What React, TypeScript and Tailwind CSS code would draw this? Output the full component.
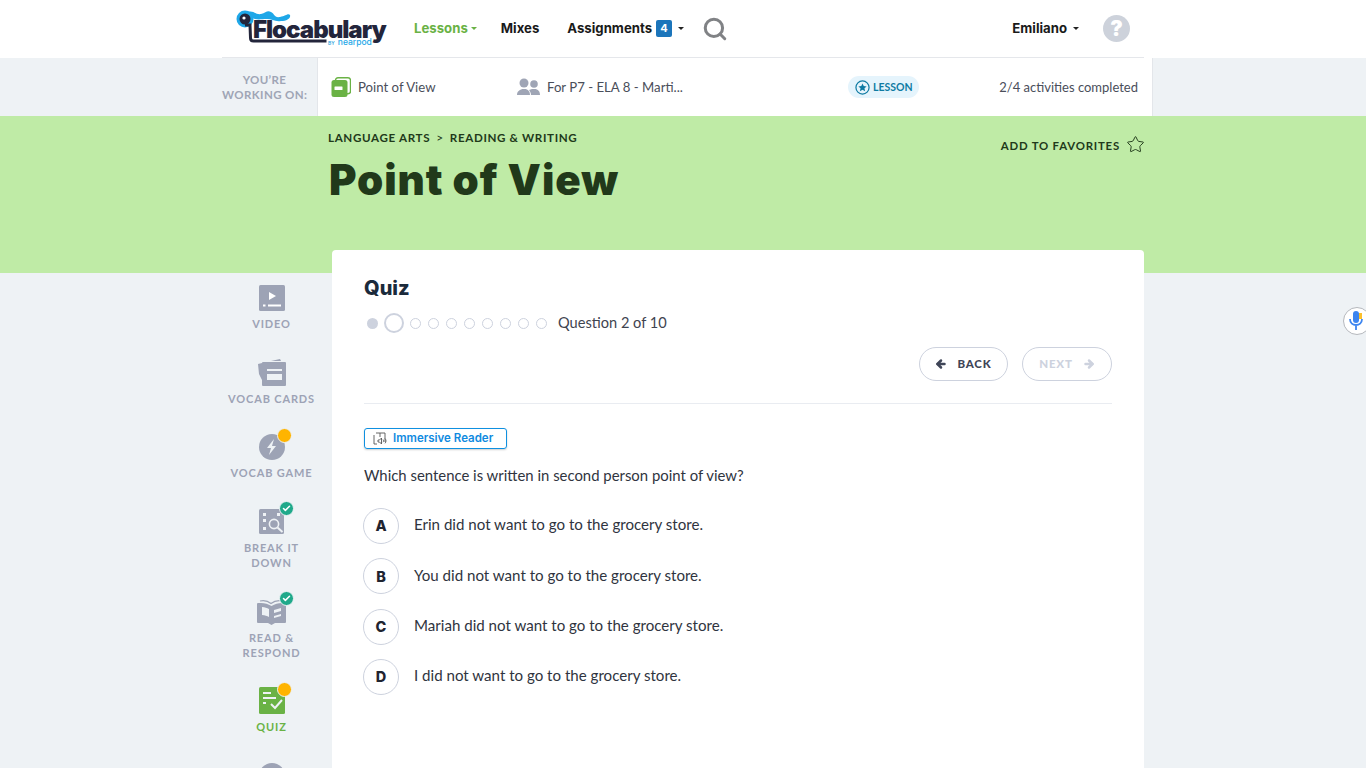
// App.tsx
import { Search, ArrowLeft, ArrowRight, Star, Check } from 'lucide-react';

const bodyFont = "font-['Lato','Noto_Sans',sans-serif]";
const headFont = "font-['Inter','Liberation_Sans',sans-serif]";

function Caret({ color = 'border-t-[#222]' }: { color?: string }) {
  return <span className={`inline-block w-0 h-0 border-x-[3px] border-x-transparent border-t-[3px] ${color}`} />;
}

function Logo() {
  return (
    <div className="relative w-[150px] h-[36px] shrink-0">
      <svg className="absolute left-0 top-0" width="150" height="36" viewBox="0 0 150 36">
        <path d="M12 2c5-2 8 3 13 2s6-4 10-2 3 6 9 5 8-4 10-2c1 3-3 6-9 6-6 1-9-2-14-2s-8 1-12 0-7-4-7-7z" fill="#1ea7e8" />
        <circle cx="9" cy="9" r="8.500" fill="#1ea7e8" />
        <circle cx="9" cy="9" r="5.500" fill="#23253b" />
        <circle cx="8" cy="8" r="1.600" fill="#fff" />
        <path d="M9 15l5 0 0.500 13c0 2 1 3 3 3h73" fill="none" stroke="#23253b" strokeWidth="3" />
      </svg>
      <span className={`${headFont} absolute left-[17px] top-[11px] text-[24px] leading-[18px] font-black tracking-[-1px] text-[#23253b]`}>Flocabulary</span>
      <span className={`${headFont} absolute left-[92px] top-[29px] text-[8.500px] leading-[6px] font-medium text-[#1ea7e8]`}>
        <span className="text-[5px] mr-[3px] text-[#23a0dc]">BY</span>nearpod
      </span>
    </div>
  );
}

function Header() {
  return (
    <div className="bg-white">
      <div className={`${headFont} w-[922px] h-[58px] border-b border-[#e5e7eb] flex items-center text-[13.200px] font-bold text-[#1a1a1a] ml-[222px]`}>
        <div className="ml-[14px] mt-[-1px]"><Logo /></div>
        <div className="ml-[28px] flex items-center gap-[3px] text-[#6ab245]">
          Lessons <Caret color="border-t-[#6ab245]" />
        </div>
        <div className="ml-[24px]">Mixes</div>
        <div className="ml-[28px] flex items-center">
          Assignments
          <span className="ml-[4px] w-[16px] h-[17px] rounded-[2px] bg-[#1b75bb] text-white text-[11px] flex items-center justify-center">4</span>
          <span className="ml-[6px] flex"><Caret /></span>
        </div>
        <Search className="ml-[18px] text-[#808285]" size={26} strokeWidth={2.800} />
        <div className="ml-auto flex items-center">
          Emiliano
          <span className="ml-[6px] flex"><Caret /></span>
        </div>
        <div className="ml-[24px] mr-[14px] w-[27px] h-[27px] rounded-full bg-[#cdd2db] text-white text-[21px] font-black flex items-center justify-center">?</div>
      </div>
    </div>
  );
}

function WorkingRow() {
  return (
    <div className="h-[58px] ml-[222px] w-[931px] flex">
      <div className="w-[95px] pr-[10px]">
        <div className={`${bodyFont} pt-[14px] text-center text-[11.500px] leading-[15px] font-bold tracking-[0.4px] text-[#9fa5b5] whitespace-nowrap`}>
          YOU’RE<br />WORKING ON:
        </div>
      </div>
      <div className={`${bodyFont} flex-1 bg-white border-x border-[#e3e6ea] flex items-center text-[13.200px] text-[#4a4e5a]`}>
        <svg className="ml-[13px]" width="20" height="20" viewBox="0 0 20 20">
          <rect x="4.500" y="0.800" width="15" height="16" rx="2.500" fill="none" stroke="#6ab245" strokeWidth="1.400" />
          <rect x="0.500" y="3" width="16" height="17" rx="2.500" fill="#6ab245" />
          <rect x="3.500" y="9.500" width="8" height="3.500" rx="0.500" fill="#fff" />
        </svg>
        <span className="ml-[7px] mt-[1px] w-[159px]">Point of View</span>
        <svg width="23" height="18" viewBox="0 0 23 18" fill="#9fa5b5">
          <circle cx="7" cy="5" r="4.500" />
          <path d="M0 17c0-4 3-5 5-6h4c2 1 4 2 4 6z" />
          <circle cx="17" cy="6" r="3.800" />
          <path d="M14 17c0-2-1-4-2-5l3-1h4c2 1 4 2 4 6z" />
        </svg>
        <span className="ml-[7px] mt-[1px] w-[301px]">For P7 - ELA 8 - Marti...</span>
        <div className="w-[71px] h-[22px] rounded-full bg-[#e5f4fc] flex items-center pl-[7px] text-[10.500px] font-bold text-[#0f7ba3]">
          <svg width="15" height="15" viewBox="0 0 16 16" className="mr-[3px]">
            <circle cx="8" cy="8" r="7" fill="none" stroke="#0f7ba3" strokeWidth="1.300" />
            <path d="M8 3.600l1.300 2.900 3.100.3-2.300 2.100.7 3.100L8 10.400l-2.800 1.600.7-3.100-2.300-2.100 3.100-.3z" fill="#0f7ba3" />
          </svg>
          <span className="mt-[1px]">LESSON</span>
        </div>
        <span className="ml-auto mr-[14px] mt-[1px] text-[13px]">2/4 activities completed</span>
      </div>
    </div>
  );
}

function Banner() {
  return (
    <div className="h-[157px] bg-[#bfeba6]">
      <div className="ml-[328px] w-[816px] flex text-[#21391a]">
        <div>
          <div className={`${bodyFont} mt-[15px] flex items-center text-[11.600px] leading-[14px] font-bold tracking-[0.650px]`}>
            LANGUAGE ARTS <span className="mx-[6px] text-[12px] font-normal">&gt;</span> READING &amp; WRITING
          </div>
          <h1 className={`${headFont} mt-[10px] ml-[1px] text-[42px] leading-[50px] font-black tracking-[0.900px]`}>Point of View</h1>
        </div>
        <div className={`${bodyFont} ml-auto -mr-[1px] mt-[19px] h-[22px] flex items-center text-[11.400px] font-bold tracking-[0.8px]`}>
          ADD TO FAVORITES
          <Star className="ml-[6px] mt-[-4px]" size={19} strokeWidth={1.200} />
        </div>
      </div>
    </div>
  );
}

function IconVideo() {
  return (
    <svg width="26" height="26" viewBox="0 0 26 26">
      <rect width="26" height="26" rx="1.500" fill="#9da3b5" />
      <path d="M10 7l7 4-7 4z" fill="#fff" />
      <rect x="4" y="19.500" width="2.500" height="2" fill="#fff" />
      <rect x="9" y="19.500" width="13" height="2" fill="#fff" />
    </svg>
  );
}

function IconCards() {
  return (
    <svg width="30" height="28" viewBox="0 0 30 28">
      <path d="M1 6l4-1v17L2 16zM14 3l9-2 1 2z" fill="#9da3b5" />
      <rect x="5" y="4" width="24" height="24" rx="1" fill="#9da3b5" />
      <rect x="10" y="11" width="15" height="2" fill="#eef2f5" />
      <rect x="10" y="16" width="15" height="6" fill="#eef2f5" />
    </svg>
  );
}

function IconGame() {
  return (
    <svg width="26" height="26" viewBox="0 0 26 26">
      <circle cx="13" cy="13" r="13" fill="#9da3b5" />
      <path d="M15 5l-7 9h4l-2 7 7-9h-4z" fill="#eef2f5" />
    </svg>
  );
}

function IconBreak() {
  return (
    <svg width="26" height="26" viewBox="0 0 26 26">
      <rect width="25" height="25" rx="1.500" fill="#9da3b5" />
      <rect x="4" y="4" width="3" height="3" fill="#eef2f5" />
      <rect x="4" y="10" width="3" height="3" fill="#eef2f5" />
      <rect x="4" y="18" width="3" height="3" fill="#eef2f5" />
      <rect x="18" y="4" width="3" height="3" fill="#eef2f5" />
      <circle cx="15" cy="15" r="4.600" fill="none" stroke="#eef2f5" strokeWidth="1.600" />
      <path d="M18.500 18.500l5 4.500" stroke="#eef2f5" strokeWidth="2" />
    </svg>
  );
}

function IconBook() {
  return (
    <svg width="29" height="26" viewBox="0 0 29 26">
      <path d="M3 2c4-1 8 0 11 2.500C17 2 21 1 26 2" fill="none" stroke="#9da3b5" strokeWidth="1.200" />
      <path d="M1 4h3c4 0 7 1 10.500 3C18 5 21 4 25 4h3a1 1 0 0 1 1 1v18a1 1 0 0 1-1 1H18l-3.500 2-3.500-2H1a1 1 0 0 1-1-1V5a1 1 0 0 1 1-1z" fill="#9da3b5" />
      <path d="M5 8c3 0 5 1 7 2v8c-2-1-4-2-7-2zM17 11l7-2v3l-7 2zM17 17l7-2v2l-7 2z" fill="#eef2f5" />
    </svg>
  );
}

function IconQuiz() {
  return (
    <svg width="26" height="27" viewBox="0 0 26 27">
      <rect width="26" height="27" rx="1.500" fill="#6ab245" />
      <rect x="4" y="5" width="8" height="2" fill="#eef2f5" />
      <rect x="4" y="10" width="13" height="2" fill="#eef2f5" />
      <rect x="4" y="15" width="3" height="2" fill="#eef2f5" />
      <path d="M12 17l4 4 7-8" fill="none" stroke="#eef2f5" strokeWidth="2" />
    </svg>
  );
}

type NavItem = { label: string[]; icon: React.ReactNode; badge?: 'todo' | 'done'; active?: boolean };

const navItems: NavItem[] = [
  { label: ['VIDEO'], icon: <IconVideo /> },
  { label: ['VOCAB CARDS'], icon: <IconCards /> },
  { label: ['VOCAB GAME'], icon: <IconGame />, badge: 'todo' },
  { label: ['BREAK IT', 'DOWN'], icon: <IconBreak />, badge: 'done' },
  { label: ['READ &', 'RESPOND'], icon: <IconBook />, badge: 'done' },
  { label: ['QUIZ'], icon: <IconQuiz />, badge: 'todo', active: true },
  { label: [], icon: <IconGame /> },
];

function Sidebar() {
  return (
    <div className="w-[99px] pt-[10px] mr-[11px] shrink-0">
      {navItems.map((item, i) => (
        <div key={i} className="mb-[26.700px] flex flex-col items-center">
          <div className="relative w-[26px] h-[28px] flex items-end justify-center">
            <div className="shrink-0 flex">{item.icon}</div>
            {item.badge === 'todo' && (
              <span className="absolute left-[18px] top-[-4px] w-[13px] h-[13px] rounded-full bg-[#ffb400] border border-[#eef2f5] box-content" />
            )}
            {item.badge === 'done' && (
              <span className="absolute left-[20px] top-[-6px] w-[13px] h-[13px] rounded-full bg-[#1fa98a] border border-[#eef2f5] box-content flex items-center justify-center">
                <Check size={9} strokeWidth={4} className="text-white" />
              </span>
            )}
          </div>
          <div className={`${bodyFont} mt-[5px] text-center text-[11px] leading-[15px] font-bold tracking-[0.850px] whitespace-nowrap ${item.active ? 'text-[#6ab245]' : 'text-[#9da3b5]'}`}>
            {item.label.map(l => <div key={l}>{l}</div>)}
          </div>
        </div>
      ))}
    </div>
  );
}

function ProgressDots() {
  return (
    <div className="mt-[13px] h-[20px] flex items-center">
      <span className="ml-[3px] w-[11px] h-[11px] rounded-full bg-[#cdd2de]" />
      <span className="ml-[6px] w-[20px] h-[20px] rounded-full border-2 border-[#cdd2de]" />
      <div className="ml-[6px] flex gap-[7px]">
        {[3, 4, 5, 6, 7, 8, 9, 10].map(n => (
          <span key={n} className="w-[11px] h-[11px] rounded-full border border-[#cdd2de]" />
        ))}
      </div>
      <span className={`${bodyFont} ml-[11px] text-[14.600px] text-[#3f4450]`}>Question 2 of 10</span>
    </div>
  );
}

const options = [
  { key: 'A', text: 'Erin did not want to go to the grocery store.' },
  { key: 'B', text: 'You did not want to go to the grocery store.' },
  { key: 'C', text: 'Mariah did not want to go to the grocery store.' },
  { key: 'D', text: 'I did not want to go to the grocery store.' },
];

function QuizCard() {
  return (
    <div className="w-[812px] h-[600px] -mt-[23px] bg-white rounded-t-[4px] px-[32px] pt-[26px] shrink-0">
      <h2 className={`${headFont} text-[20px] leading-[24px] font-extrabold text-[#1b2a3b]`}>Quiz</h2>
      <ProgressDots />
      <div className="mt-[14px] flex justify-end gap-[14px]">
        <button className={`${bodyFont} w-[89px] h-[34px] pb-[1px] rounded-full border border-[#cdd2de] flex items-center justify-center text-[11.500px] font-black tracking-[0.800px] text-[#3f4557]`}>
          <ArrowLeft size={12} strokeWidth={5} className="mr-[10px]" /> BACK
        </button>
        <button className={`${bodyFont} w-[90px] h-[34px] pb-[1px] rounded-full border border-[#cdd2de] flex items-center justify-center text-[11.500px] font-black tracking-[0.800px] text-[#cdd2de]`}>
          NEXT <ArrowRight size={12} strokeWidth={5} className="ml-[10px]" />
        </button>
      </div>
      <div className="mt-[22px] border-t border-[#e9ecf1]" />
      <button className={`${headFont} mt-[24px] w-[143px] h-[21px] rounded-[3px] border border-[#0f90e0] shadow-[0_1px_2px_rgba(0,0,0,0.2)] flex items-center pl-[8px] text-[11.500px] font-semibold text-[#0f8ae0]`}>
        <svg width="15" height="14" viewBox="0 0 15 14" fill="none" stroke="#555" strokeWidth="0.900" className="mr-[5px]">
          <path d="M1 3v9h3M3 1h4v4M7 1h5v9" />
          <path d="M5 8h1.500l2-2v6l-2-2H5zM10 7.500c.7.7.7 2 0 2.700M12 6.500c1.300 1.300 1.300 3.500 0 4.800" />
        </svg>
        Immersive Reader
      </button>
      <p className={`${bodyFont} mt-[15px] text-[14.900px] leading-[22px] text-[#2f3440]`}>
        Which sentence is written in second person point of view?
      </p>
      <div className="mt-[22px] flex flex-col gap-[14.400px]">
        {options.map(o => (
          <div key={o.key} className="flex items-center">
            <span className={`${headFont} -ml-[1px] w-[36px] h-[36px] rounded-full border border-[#cdd2de] flex items-center justify-center text-[14.500px] font-extrabold text-[#1f2430]`}>{o.key}</span>
            <span className={`${bodyFont} ml-[15px] mt-[-3px] text-[15.100px] text-[#2f3440]`}>{o.text}</span>
          </div>
        ))}
      </div>
    </div>
  );
}

function MicButton() {
  return (
    <div className="absolute left-[1343px] top-[307px] w-[28px] h-[28px] rounded-full border border-[#b5b8bd] bg-white flex items-center justify-center">
      <svg width="20" height="22" viewBox="0 0 20 22">
        <rect x="10" y="3" width="5" height="6" fill="#fbc02d" />
        <rect x="6" y="1" width="6" height="12" rx="3" fill="#3d85f0" />
        <path d="M3 9c0 4 3 6 6 6s6-2 6-6M9 15v5" fill="none" stroke="#3d85f0" strokeWidth="1.800" />
      </svg>
    </div>
  );
}

export default function App() {
  return (
    <div className="relative h-screen overflow-hidden bg-[#eef2f5]">
      <Header />
      <WorkingRow />
      <Banner />
      <div className="ml-[222px] flex">
        <Sidebar />
        <QuizCard />
      </div>
      <MicButton />
    </div>
  );
}
